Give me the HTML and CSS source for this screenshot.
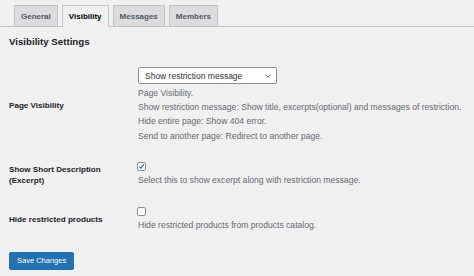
FILE: index.html
```html
<!DOCTYPE html>
<html lang="en">
<head>
<meta charset="utf-8">
<title>Visibility Settings</title>
<link rel="stylesheet" href="styles.css">
</head>
<body>
<nav class="tabs">
  <a class="tab">General</a>
  <a class="tab tab-active">Visibility</a>
  <a class="tab">Messages</a>
  <a class="tab">Members</a>
</nav>
<main class="wrap">
  <h2 class="title">Visibility Settings</h2>
  <div class="form-table">
    <div class="label">Page Visibility</div>
    <div class="field">
      <div class="select">
        <span>Show restriction message</span>
        <svg class="chev" width="6" height="4" viewBox="0 0 6 4"><polyline points="0.5,0.7 3,3.2 5.5,0.7" fill="none" stroke="#50575e" stroke-width="1"/></svg>
      </div>
      <div class="desc-block">
        <p class="desc">Page Visibility.</p>
        <p class="desc">Show restriction message: Show title, excerpts(optional) and messages of restriction.</p>
        <p class="desc">Hide entire page: Show 404 error.</p>
        <p class="desc">Send to another page: Redirect to another page.</p>
      </div>
    </div>

    <div class="label">Show Short Description<br>(Excerpt)</div>
    <div class="field">
      <span class="checkbox">
        <svg width="7" height="7" viewBox="0 0 7 7"><polyline points="1.2,3.6 2.9,5.2 5.9,1.4" fill="none" stroke="#2271b1" stroke-width="1.2"/></svg>
      </span>
      <p class="desc">Select this to show excerpt along with restriction message.</p>
    </div>

    <div class="label">Hide restricted products</div>
    <div class="field">
      <span class="checkbox"></span>
      <p class="desc">Hide restricted products from products catalog.</p>
    </div>
  </div>
  <button class="button">Save Changes</button>
</main>
</body>
</html>
```
FILE: styles.css
```css
html, body {
  margin: 0;
  padding: 0;
  background: #f0f0f1;
  font-family: "Liberation Sans", Arial, sans-serif;
  color: #1d2327;
}
.tabs {
  display: flex;
  align-items: flex-end;
  gap: 4px;
  padding: 5px 0 0 14px;
  border-bottom: 1px solid #c3c4c7;
  height: 21px;
}
.tab {
  box-sizing: border-box;
  height: 21px;
  padding: 0 6px;
  display: flex;
  align-items: center;
  background: #dcdcde;
  border: 1px solid #c3c4c7;
  border-bottom: none;
  font-size: 8px;
  font-weight: 700;
  color: #50575e;
}
.tab-active {
  background: #f0f0f1;
  color: #000;
  height: 22px;
  margin-bottom: -1px;
  padding-bottom: 1px;
}
.wrap {
  padding: 0 0 0 9px;
}
.title {
  margin: 9px 0 0;
  font-size: 9.7px;
  line-height: 12px;
  font-weight: 700;
  color: #1d2327;
}
.form-table {
  display: grid;
  grid-template-columns: 129px 1fr;
  row-gap: 19px;
  margin-top: 19px;
  align-items: center;
}
.label {
  font-size: 8.1px;
  line-height: 11px;
  font-weight: 700;
  color: #1d2327;
}
.field {
  display: flex;
  flex-direction: column;
  align-items: flex-start;
}
.select {
  box-sizing: border-box;
  width: 139px;
  height: 17px;
  background: #fff;
  border: 1px solid #8c8f94;
  border-radius: 2px;
  display: flex;
  align-items: center;
  justify-content: space-between;
  padding: 0 5px 0 6px;
  font-size: 8.5px;
  color: #2c3338;
}
.desc-block {
  margin-top: 1.5px;
}
.desc {
  margin: 0;
  font-size: 8.6px;
  line-height: 14.4px;
  color: #646970;
}
.checkbox {
  box-sizing: border-box;
  width: 9px;
  height: 9px;
  border: 1px solid #8c8f94;
  border-radius: 2px;
  background: #fff;
  display: flex;
  align-items: center;
  justify-content: center;
  margin-bottom: 2px;
  margin-left: -1px;
}
.button {
  margin-top: 20px;
  box-sizing: border-box;
  height: 18px;
  padding: 0 7px;
  background: #2271b1;
  border: 1px solid #2271b1;
  border-radius: 2px;
  color: #fff;
  font-family: "Liberation Sans", Arial, sans-serif;
  font-size: 7.5px;
}
```
